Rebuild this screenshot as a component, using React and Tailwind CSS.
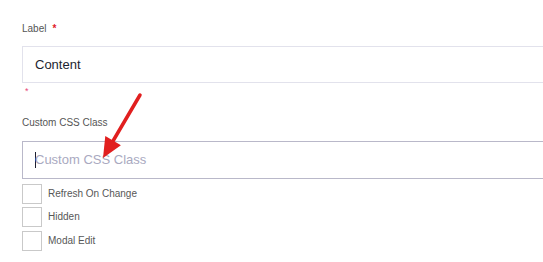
import React from "react";

const font = { fontFamily: '"Liberation Sans", Arial, sans-serif' };

function Check({ label, className = "" }) {
  return (
    <div className={`flex items-center ${className}`}>
      <div className="w-[20px] h-[20px] border border-[#c9c9c9] bg-white shrink-0" />
      <span className="ml-[6px] text-[10px] leading-[12px] text-[#575757]">{label}</span>
    </div>
  );
}

export default function App() {
  return (
    <div className="relative w-[543px] h-[262px] overflow-hidden bg-white" style={font}>
      <div className="pl-[22px] pt-[23px]">
        <div className="flex items-start text-[10px] leading-[12px] text-[#555]">
          <span>Label</span>
          <span className="ml-[6px] text-[#e0202a] text-[10px] font-bold">*</span>
        </div>
        <div className="mt-[11px] w-[600px] h-[37px] border border-[#e2e2ec] flex items-center pl-[12px] text-[13px] text-[#1d1f30]">
          Content
        </div>
        <div className="ml-[3px] mt-[3px] text-[9px] leading-[10px] text-[#e8457a]">*</div>
        <div className="mt-[21px] text-[10px] leading-[12px] text-[#555]">Custom CSS Class</div>
        <div className="mt-[12px] w-[600px] h-[38px] border border-[#b9b8c9] flex items-center pl-[12px]">
          <div className="w-[1px] h-[16px] bg-[#1d1f30] -mr-[1px]" />
          <span className="text-[13px] text-[#a9a9bf]">Custom CSS Class</span>
        </div>
        <Check label="Refresh On Change" className="mt-[5px]" />
        <Check label="Hidden" className="mt-[3px]" />
        <Check label="Modal Edit" className="mt-[4px]" />
      </div>
      <svg className="absolute left-0 top-0 pointer-events-none" width="543" height="262" viewBox="0 0 543 262">
        <line x1="140" y1="95" x2="113" y2="141" stroke="#e11f1f" strokeWidth="3.5" strokeLinecap="round" />
        <polygon points="103,158 105.3,136.1 120.9,145.3" fill="#e11f1f" />
      </svg>
    </div>
  );
}
